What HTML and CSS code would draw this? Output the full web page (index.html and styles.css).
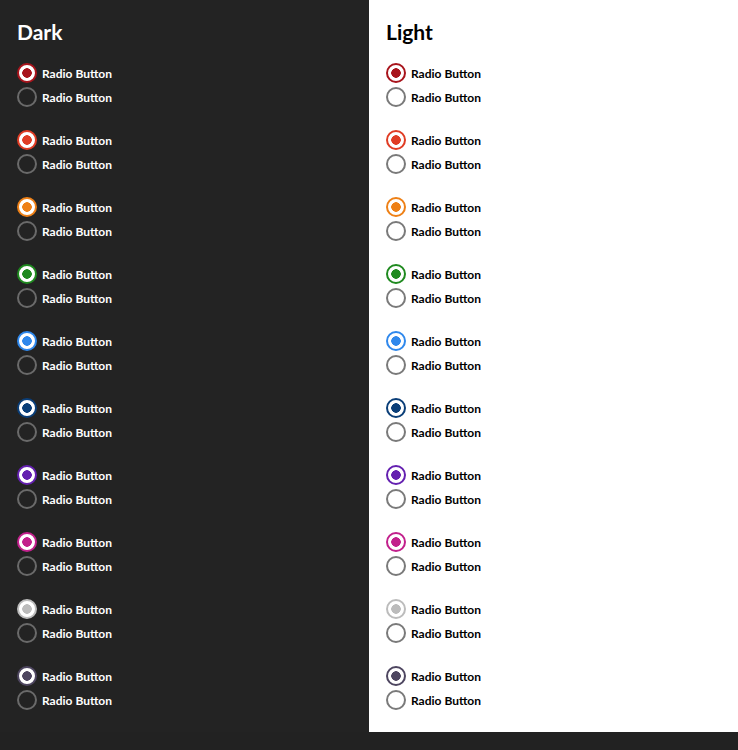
FILE: index.html
```html
<!DOCTYPE html>
<html lang="en">
<head>
  <meta charset="UTF-8">
  <meta name="viewport" content="width=device-width, initial-scale=1.0">
  <title>Radio Buttons</title>
  <link rel="stylesheet" href="styles.css">
</head>
<body>
  <div class="page">
    <div class="panel dark">
      <h2>Dark</h2>
      <div class="groups" id="darkGroups"></div>
    </div>
    <div class="panel light">
      <h2>Light</h2>
      <div class="groups" id="lightGroups"></div>
    </div>
  </div>

  <script>
    const colors = [
      '#a8141c', '#e03c24', '#ee8016', '#1f8a1f', '#2f88ec',
      '#0a3e78', '#6420b0', '#c2208c', '#bcbcbc', '#4e4660'
    ];

    function buildGroups(el, name) {
      colors.forEach((color, i) => {
        const group = document.createElement('div');
        group.className = 'group';
        group.style.setProperty('--accent', color);
        for (let j = 0; j < 2; j++) {
          const label = document.createElement('label');
          label.className = 'radio';
          const input = document.createElement('input');
          input.type = 'radio';
          input.name = name + i;
          input.checked = j === 0;
          const span = document.createElement('span');
          span.textContent = 'Radio Button';
          label.appendChild(input);
          label.appendChild(span);
          group.appendChild(label);
        }
        el.appendChild(group);
      });
    }

    buildGroups(document.getElementById('darkGroups'), 'dark');
    buildGroups(document.getElementById('lightGroups'), 'light');
  </script>
</body>
</html>
```

FILE: styles.css
```css
body {
  margin: 0;
  background-color: #222;
  font-family: Lato, "Open Sans", sans-serif;
}
.page {
  display: flex;
  align-items: flex-start;
}
.panel {
  width: 369px;
  box-sizing: border-box;
  padding: 20px 17px;
}
.panel h2 {
  margin: 0 0 17px;
  font-size: 21px;
  line-height: 24px;
  font-weight: 700;
}
.dark {
  background-color: #232323;
  color: #fff;
}
.light {
  background-color: #fff;
  color: #000;
  height: 732px;
}
.groups {
  display: flex;
  flex-direction: column;
  gap: 19px;
}
.radio {
  display: flex;
  align-items: center;
  gap: 5px;
  height: 24px;
  font-size: 12px;
  font-weight: 700;
  cursor: pointer;
}
.radio input {
  appearance: none;
  margin: 0;
  width: 20px;
  height: 20px;
  border-radius: 50%;
  box-sizing: border-box;
  border: 2px solid #6a6a6a;
  background: transparent;
}
.light .radio input {
  border-color: #7a7a7a;
}
.radio input:checked {
  border-color: var(--accent);
  background: radial-gradient(circle, var(--accent) 0 4.5px, #fff 5px);
}
```
